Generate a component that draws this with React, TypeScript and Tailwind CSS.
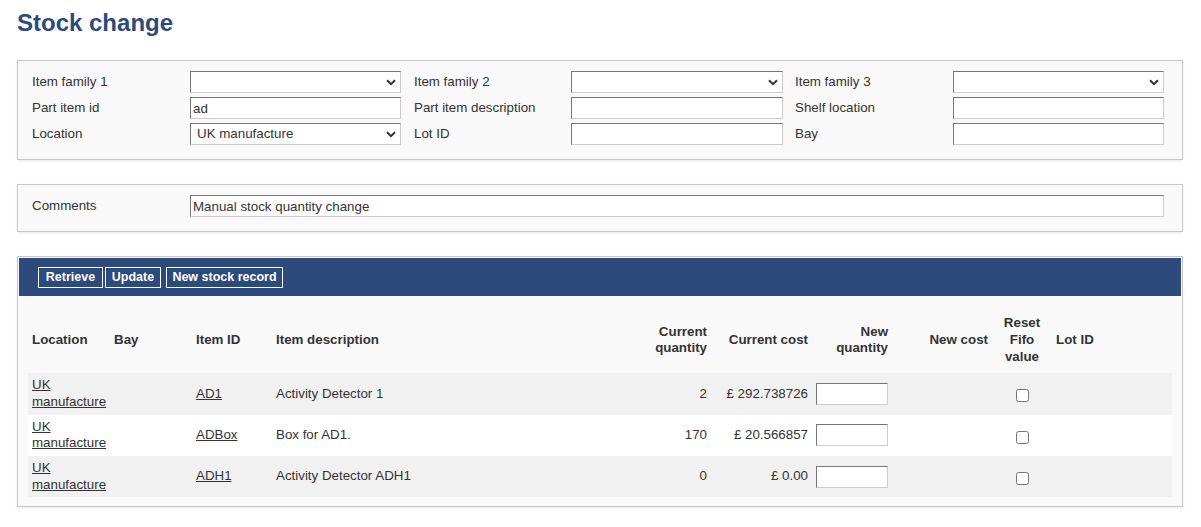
const font = "font-['Liberation_Sans',Arial,sans-serif]";
const fieldClass =
  "block h-[22px] w-full border border-[#cccccc] border-t-[#767676] border-l-[#767676] bg-white px-[2px] text-[13.33px] text-[#333333] outline-none";

function Select({ value }: { value?: string }) {
  return (
    <div className="relative">
      <select className={`${fieldClass} appearance-none pl-[6px]`} defaultValue={value}>
        <option>{value}</option>
      </select>
      <svg className="pointer-events-none absolute right-[5px] top-[8px]" width="10" height="7" viewBox="0 0 10 7">
        <path d="M1 1.2 L5 5.2 L9 1.2" fill="none" stroke="#333" strokeWidth="2" />
      </svg>
    </div>
  );
}

function Input({ value }: { value?: string }) {
  return <input className={fieldClass} defaultValue={value} />;
}

function Label({ children }: { children: string }) {
  return <div className="text-[13.33px] leading-[22px] text-[#333333]">{children}</div>;
}

const rows = [
  { id: "AD1", desc: "Activity Detector 1", qty: "2", cost: "£ 292.738726" },
  { id: "ADBox", desc: "Box for AD1.", qty: "170", cost: "£ 20.566857" },
  { id: "ADH1", desc: "Activity Detector ADH1", qty: "0", cost: "£ 0.00" },
];

const panel = "ml-[17px] w-[1166px] border border-[#c4c6ca] bg-[#f9f9f9] shadow-[0_1px_3px_rgba(0,0,0,0.08)]";
const toolButton = "h-[21px] border border-white text-[12.5px] font-bold text-white";
const cell = "px-[4px] pb-[2px]";

export default function App() {
  return (
    <div className={`${font} h-[527px] w-[1201px] overflow-hidden bg-white text-[13.33px] text-[#333333]`}>
      <h1 className="px-[17px] pt-[9px] text-[24px] font-bold leading-[28px] text-[#2c4a7c]">Stock change</h1>

      <div className={`${panel} mt-[23px] h-[100px] px-[14px] pt-[10px]`}>
        <div className="grid grid-cols-[158px_211px_13px_157px_212px_12px_158px_211px] gap-y-[4px]">
          <Label>Item family 1</Label>
          <Select />
          <div />
          <Label>Item family 2</Label>
          <Select />
          <div />
          <Label>Item family 3</Label>
          <Select />

          <Label>Part item id</Label>
          <Input value="ad" />
          <div />
          <Label>Part item description</Label>
          <Input />
          <div />
          <Label>Shelf location</Label>
          <Input />

          <Label>Location</Label>
          <Select value="UK manufacture" />
          <div />
          <Label>Lot ID</Label>
          <Input />
          <div />
          <Label>Bay</Label>
          <Input />
        </div>
      </div>

      <div className={`${panel} mt-[24px] h-[48px] px-[14px] pt-[10px]`}>
        <div className="grid grid-cols-[158px_974px]">
          <Label>Comments</Label>
          <Input value="Manual stock quantity change" />
        </div>
      </div>

      <div className={`${panel} mt-[24px] h-[251px] p-px`}>
        <div className="flex h-[38px] items-center bg-[#2c4a7c] pl-[19px]">
          <button className={`${toolButton} w-[65px]`}>Retrieve</button>
          <button className={`${toolButton} ml-[2px] w-[56px]`}>Update</button>
          <button className={`${toolButton} ml-[5px] w-[117px]`}>New stock record</button>
        </div>
        <div className="pl-[9px]">
          <table className="w-[1144px] table-fixed border-collapse text-[13.33px] leading-[17px]">
            <colgroup>
              <col className="w-[82px]" />
              <col className="w-[82px]" />
              <col className="w-[80px]" />
              <col className="w-[379px]" />
              <col className="w-[60px]" />
              <col className="w-[101px]" />
              <col className="w-[80px]" />
              <col className="w-[100px]" />
              <col className="w-[60px]" />
              <col className="w-[120px]" />
            </colgroup>
            <thead>
              <tr className="h-[77px] font-bold [&>td]:pt-[10px]">
                <td className="px-[4px]">Location</td>
                <td className="px-[4px]">Bay</td>
                <td className="px-[4px]">Item ID</td>
                <td className="px-[4px]">Item description</td>
                <td className="px-[4px] text-right leading-[16px]">Current quantity</td>
                <td className="px-[4px] text-right">Current cost</td>
                <td className="px-[4px] text-right leading-[16px]">New quantity</td>
                <td className="px-[4px] text-right">New cost</td>
                <td className="px-[4px] text-center">Reset Fifo value</td>
                <td className="px-[4px]">Lot ID</td>
              </tr>
            </thead>
            <tbody>
              {rows.map((row, i) => (
                <tr key={row.id} className={i === 1 ? "h-[41px] bg-white" : i === 0 ? "h-[42px] bg-[#f1f1f1]" : "h-[41px] bg-[#f1f1f1]"}>
                  <td className={i === 1 ? `${cell} leading-[16px]` : cell}>
                    <a href="#" className="underline">UK manufacture</a>
                  </td>
                  <td className="px-[4px]" />
                  <td className={cell}>
                    <a href="#" className="underline">{row.id}</a>
                  </td>
                  <td className={cell}>{row.desc}</td>
                  <td className={`${cell} text-right`}>{row.qty}</td>
                  <td className={`${cell} text-right`}>{row.cost}</td>
                  <td className={i === 1 ? "px-[4px] pb-px" : "px-[4px]"}>
                    <input className="block h-[22px] w-[72px] border border-[#cccccc] border-t-[#767676] border-l-[#767676] bg-white outline-none" />
                  </td>
                  <td className="px-[4px]" />
                  <td className="px-[4px] text-center">
                    <input type="checkbox" className={i === 0 ? "mt-[2px] h-[13px] w-[13px] align-middle" : "mt-[3px] h-[13px] w-[13px] align-middle"} />
                  </td>
                  <td className="px-[4px]" />
                </tr>
              ))}
            </tbody>
          </table>
        </div>
      </div>
    </div>
  );
}
